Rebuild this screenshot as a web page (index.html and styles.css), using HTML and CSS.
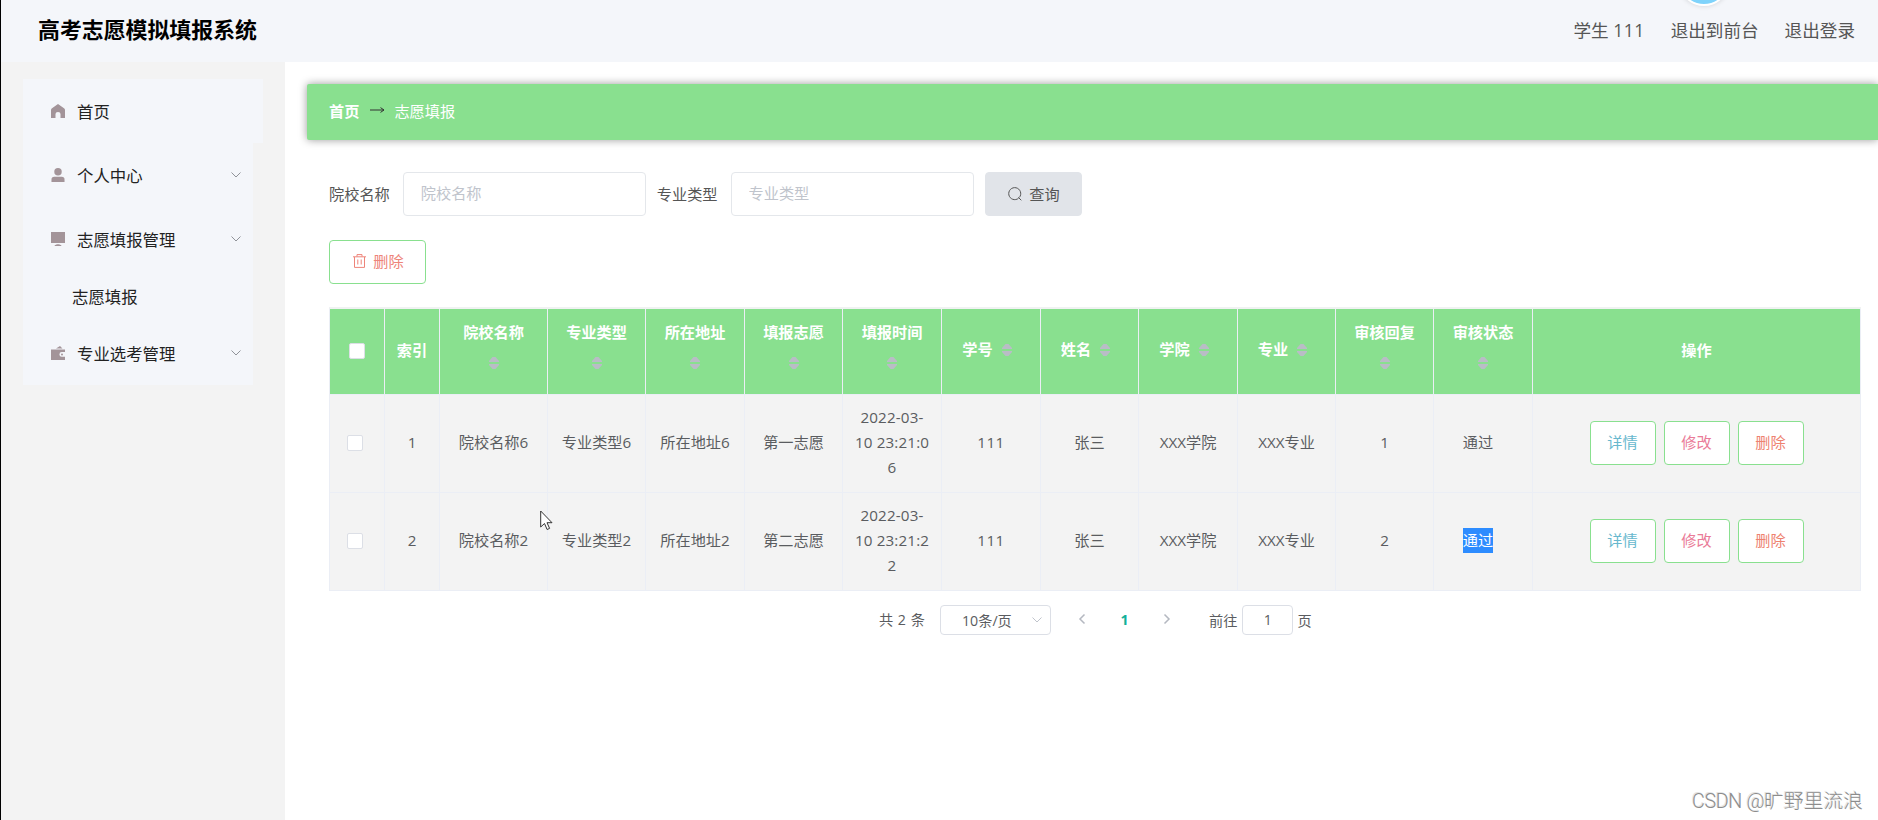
FILE: index.html
```html
<!DOCTYPE html>
<html lang="zh-CN">
<head>
<meta charset="utf-8">
<title>高考志愿模拟填报系统</title>
<link rel="stylesheet" href="styles.css">
</head>
<body>
<svg class="defs" aria-hidden="true">
  <symbol id="chevron" viewBox="0 0 12 12"><path d="M1.500 3.500 6 8l4.500-4.500" fill="none" stroke="currentColor" stroke-width="1"/></symbol>
  <symbol id="sort" viewBox="0 0 10 12"><path d="M0 5V4L3.500 0h3L10 4v1zM0 7h10V8l-3.500 4h-3L0 8z" fill="currentColor"/></symbol>
</svg>
<div class="app">
  <header class="topbar">
    <h1 class="brand">高考志愿模拟填报系统</h1>
    <nav class="account"><span>学生 <span class="num">111</span></span><span>退出到前台</span><span>退出登录</span></nav>
    <span class="avatar"></span>
  </header>
  <div class="body">
    <aside class="sidebar">
      <ul class="menu">
        <li class="item home"><svg class="icon" viewBox="0 0 14 14"><path d="M7 0 13 4.300Q14 5 14 6V14H9.500V10Q9.500 8 7 8T4.500 10V14H0V6Q0 5 1 4.300z"/></svg><span>首页</span></li>
        <li class="item"><svg class="icon" viewBox="0 0 14 15"><circle cx="7" cy="4" r="4"/><path d="M0 15v-2.500Q0 9.500 3 9.500h8q3 0 3 3V15z"/></svg><span>个人中心</span><svg class="arrow"><use href="#chevron"/></svg></li>
        <li class="item"><svg class="icon" viewBox="0 0 14 14"><path d="M0 0h14v11H0zM6 12.300h2l2.300 1V14H3.700v-.7z"/></svg><span>志愿填报管理</span><svg class="arrow"><use href="#chevron"/></svg></li>
        <li class="item sub"><span>志愿填报</span></li>
        <li class="item last"><svg class="icon" viewBox="0 0 14 14"><path d="M0 3.500h14V6h-3.200a2.300 2.300 0 0 0 0 4.800H14V14H0zM5 2.500 9 0l2.500 2.500z"/><circle cx="11" cy="8.400" r="1"/></svg><span>专业选考管理</span><svg class="arrow"><use href="#chevron"/></svg></li>
      </ul>
    </aside>
    <main class="main">
      <div class="crumbs"><b>首页</b><svg class="to" viewBox="0 0 15 6"><path d="M0 3h14M10.500.6 14 3l-3.500 2.400" fill="none" stroke="currentColor" stroke-width="1"/></svg><span>志愿填报</span></div>
      <form class="filters">
        <label>院校名称</label><input class="field" placeholder="院校名称">
        <label>专业类型</label><input class="field" placeholder="专业类型">
        <button type="button" class="btn search"><svg viewBox="0 0 14 14"><path d="M10.500 11.300A6 6 0 1 1 11.400 10.400M10.300 10.300 13.300 13.300" fill="none" stroke="currentColor"/></svg><span>查询</span></button>
      </form>
      <div class="tools"><button type="button" class="btn remove"><svg viewBox="0 0 13 14"><path d="M0 2.800h13M4 2.500V.6h5v1.900M1.500 3v10.400h10V3M4.800 5.500v5M8.200 5.500v5" fill="none" stroke="currentColor"/></svg><span>删除</span></button></div>
      <table class="grid">
        <colgroup><col class="c-check"><col class="c-index"><col class="c-school"><col class="c98"><col class="c99"><col class="c98"><col class="c99"><col class="c99"><col class="c98"><col class="c99"><col class="c98"><col class="c98"><col class="c99"><col></colgroup>
        <thead><tr>
          <th class="check"><i class="box head"></i></th>
          <th class="plain">索引</th>
          <th class="two">院校名称<svg><use href="#sort"/></svg></th>
          <th class="two">专业类型<svg><use href="#sort"/></svg></th>
          <th class="two">所在地址<svg><use href="#sort"/></svg></th>
          <th class="two">填报志愿<svg><use href="#sort"/></svg></th>
          <th class="two">填报时间<svg><use href="#sort"/></svg></th>
          <th class="one">学号<svg><use href="#sort"/></svg></th>
          <th class="one">姓名<svg><use href="#sort"/></svg></th>
          <th class="one">学院<svg><use href="#sort"/></svg></th>
          <th class="one">专业<svg><use href="#sort"/></svg></th>
          <th class="two">审核回复<svg><use href="#sort"/></svg></th>
          <th class="two">审核状态<svg><use href="#sort"/></svg></th>
          <th class="plain">操作</th>
        </tr></thead>
        <tbody>
          <tr><td><i class="box"></i></td><td>1</td><td>院校名称6</td><td>专业类型6</td><td>所在地址6</td><td>第一志愿</td><td class="time">2022-03-<br>10 23:21:0<br>6</td><td class="num">111</td><td>张三</td><td>XXX学院</td><td>XXX专业</td><td>1</td><td class="status">通过</td>
          <td><div class="actions"><button class="act view">详情</button><button class="act edit">修改</button><button class="act del">删除</button></div></td></tr>
          <tr><td><i class="box"></i></td><td>2</td><td>院校名称2</td><td>专业类型2</td><td>所在地址2</td><td>第二志愿</td><td class="time">2022-03-<br>10 23:21:2<br>2</td><td class="num">111</td><td>张三</td><td>XXX学院</td><td>XXX专业</td><td>2</td><td class="status"><span class="marked">通过</span></td>
          <td><div class="actions"><button class="act view">详情</button><button class="act edit">修改</button><button class="act del">删除</button></div></td></tr>
        </tbody>
      </table>
      <div class="pager">
        <span class="total">共 2 条</span>
        <span class="size">10条/页<svg><use href="#chevron"/></svg></span>
        <svg class="step prev" viewBox="0 0 8 12"><path d="M6.500 1.500 2 6l4.500 4.500"/></svg>
        <b class="current">1</b>
        <svg class="step next" viewBox="0 0 8 12"><path d="M1.500 1.500 6 6l-4.500 4.500"/></svg>
        <span class="goto">前往</span><span class="page">1</span><span>页</span>
      </div>
    </main>
  </div>
  <svg class="pointer" viewBox="0 0 13 21"><path d="M.7 1v16l3.800-3.500 2.600 6 2.500-1.100-2.600-5.700h5z" fill="#fff" stroke="#333" stroke-width="1"/></svg>
  <div class="watermark"><span class="latin">CSDN @</span>旷野里流浪</div>
</div>
</body>
</html>
```
FILE: styles.css
```css
* { box-sizing: border-box; }
body {
  margin: 0;
  font: 15.200px "Open Sans", "Noto Sans CJK SC", sans-serif;
  color: #5a5c60;
  background: #fff;
}
.defs { position: absolute; width: 0; height: 0; }
.app {
  position: relative;
  display: flex;
  flex-direction: column;
  width: 1878px;
  height: 820px;
  overflow: hidden;
  border-left: 1px solid #000;
}
.topbar {
  position: relative;
  flex: none;
  display: flex;
  align-items: center;
  justify-content: space-between;
  height: 62px;
  padding: 0 23px 2px 37px;
  background: #f4f6fa;
}
.brand { margin: 0; font-size: 21.900px; font-weight: 700; line-height: 30px; color: #000; }
.account { display: flex; gap: 26px; padding-bottom: 1px; font-size: 17.600px; line-height: 26px; color: #555; }
.num { letter-spacing: .4px; }
.avatar {
  position: absolute;
  left: 1677px;
  top: -46px;
  width: 52px;
  height: 52px;
  border: 2px solid #fff;
  border-radius: 50%;
  background: #7fd3fb;
  box-shadow: 0 0 5px rgba(0, 0, 0, .15);
}
.body { flex: 1; display: flex; min-height: 0; }
.sidebar { flex: none; width: 284px; padding: 17px 0 0 22px; background: #f3f3f3; }
.menu { width: 230px; margin: 0; padding: 0; list-style: none; }
.item {
  display: flex;
  align-items: center;
  height: 64px;
  padding: 0 11px 0 28px;
  font-size: 16.400px;
  color: #222;
  background: #f4f6fa;
}
.home { width: 240px; }
.sub { height: 50px; padding-left: 49px; }
.last { height: 64px; }
.icon { width: 14px; height: 14px; margin: 0 12px 1px 0; fill: #a39499; }
.arrow { width: 12px; height: 12px; margin-left: auto; color: #909399; }
.main { flex: 1; min-width: 0; padding: 22px 0 0 22px; }
.crumbs {
  display: flex;
  align-items: center;
  height: 56px;
  padding: 0 0 5px 22px;
  border-radius: 2px 0 0 2px;
  color: #fff;
  background: #89e08f;
  box-shadow: 0 0 8px rgba(0, 0, 0, .4);
}
.to { width: 15px; height: 6px; margin: 1px 9px 0 11px; color: #333; }
.filters { display: flex; align-items: center; margin: 32px 0 0 22px; }
.filters label { margin: 0 13px 2px 0; color: #555; }
.field {
  width: 243px;
  height: 44px;
  margin-right: 11px;
  padding: 0 17px 2px;
  border: 1px solid #e4e7eb;
  border-radius: 4px;
  font: inherit;
}
.field::placeholder { color: #c0c4cc; }
.btn {
  display: flex;
  align-items: center;
  justify-content: center;
  gap: 7px;
  width: 97px;
  height: 44px;
  padding: 0 0 0 2px;
  border: 1px solid #89e08f;
  border-radius: 4px;
  font: inherit;
  background: #fff;
}
.btn svg { width: 13px; height: 14px; }
.btn span { padding-bottom: 3px; }
.search { border-color: #e1e4e9; color: #555; background: #e1e4e9; }
.search svg { width: 14px; }
.remove { padding-bottom: 2px; color: #ee8479; }
.tools { margin: 24px 0 23px 22px; }
.grid {
  width: 1532px;
  margin-left: 22px;
  table-layout: fixed;
  border-spacing: 0;
  border-top: 2px solid #f0f2f2;
  border-left: 1px solid #ebeef5;
}
.c-check, .c-index { width: 55px; }
.c-school { width: 108px; }
.c98 { width: 98px; }
.c99 { width: 99px; }
.grid th, .grid td {
  padding: 0;
  text-align: center;
  border-right: 1px solid #ebeef5;
  border-bottom: 1px solid #ebeef5;
}
.grid th { height: 86px; color: #fff; background: #89e08f; }
.grid th svg { color: #b9bdc6; width: 10px; height: 12px; }
.grid .check { padding-bottom: 2px; }
.grid .two { padding-bottom: 14px; line-height: 22px; }
.grid .two svg { display: block; margin: 14px auto 0; }
.grid .one { padding: 0 8px 7px 0; }
.grid .one svg { margin: 0 0 0 9px; vertical-align: -1px; }
.grid .plain { padding-bottom: 5px; }
.grid td { height: 98px; padding-bottom: 2px; line-height: 24.700px; background: #f3f3f3; }
.grid .status { padding-right: 10px; }
.grid .time { letter-spacing: .15px; }
.box {
  display: block;
  width: 16px;
  height: 16px;
  margin: 0 auto;
  border: 1px solid #dcdfe6;
  border-radius: 2px;
  background: #fff;
  transform: translateX(-2px);
}
.box.head { transform: none; }
.marked { display: inline-block; color: #fff; background: #2d8cff; }
.actions { display: flex; justify-content: center; gap: 8px; }
.act {
  width: 66px;
  height: 44px;
  padding: 0;
  border: 1px solid #89e08f;
  border-radius: 4px;
  font: inherit;
  background: #fff;
}
.view { color: #67b8ce; }
.edit { color: #ea7b98; }
.del { color: #ee8270; }
.pager {
  display: flex;
  align-items: center;
  height: 30px;
  margin: 14px 0 0 572px;
  font-size: 14.200px;
}
.total { width: 61px; padding-bottom: 2px; word-spacing: 1px; }
.size, .page {
  display: flex;
  align-items: center;
  height: 30px;
  border: 1px solid #dcdfe6;
  border-radius: 4px;
}
.size { width: 111px; padding: 0 7px 0 21px; justify-content: space-between; }
.size svg { width: 12px; height: 12px; color: #c0c4cc; }
.step { width: 8px; height: 12px; margin-bottom: 2px; fill: none; stroke: #b4b8c0; stroke-width: 1.500; }
.prev { margin-left: 27px; }
.current { width: 77px; padding-bottom: 2px; text-align: center; color: #13b09a; }
.goto { margin-left: 38px; }
.page { width: 51px; margin: 0 4px 0 5px; padding-bottom: 1px; justify-content: center; }
.pointer { position: absolute; left: 539px; top: 510px; width: 13px; height: 21px; }
.watermark {
  position: absolute;
  right: 15px;
  bottom: 4px;
  font: 300 19.800px/28px Roboto, "Noto Sans CJK SC", sans-serif;
  color: #8c8c8c;
  text-shadow: -1px -1px 0 #e4e4e4;
}
.latin { letter-spacing: -.4px; }
```
